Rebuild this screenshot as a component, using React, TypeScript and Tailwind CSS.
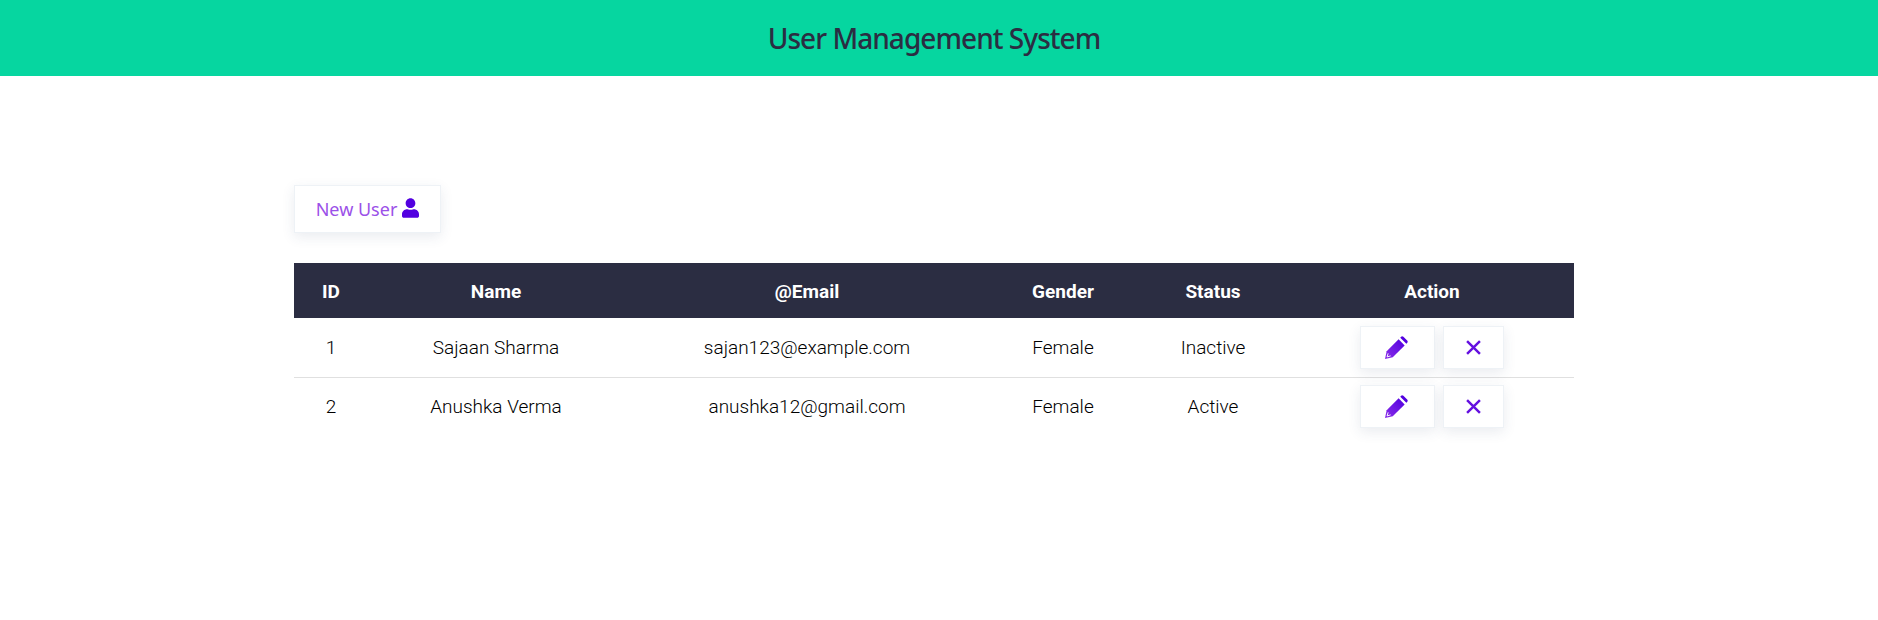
import React from 'react';
import { FaUser } from 'react-icons/fa';

type User = {
  id: number;
  name: string;
  email: string;
  gender: string;
  status: string;
};

const users: User[] = [
  { id: 1, name: 'Sajaan Sharma', email: 'sajan123@example.com', gender: 'Female', status: 'Inactive' },
  { id: 2, name: 'Anushka Verma', email: 'anushka12@gmail.com', gender: 'Female', status: 'Active' },
];

const headers = ['ID', 'Name', '@Email', 'Gender', 'Status', 'Action'];

function PencilIcon({ id }: { id: string }) {
  return (
    <svg viewBox="0 0 22 22" className="w-[23px] h-[23px] mr-[3px]">
      <defs>
        <linearGradient id={id} x1="0" y1="1" x2="1" y2="0">
          <stop offset="0" stopColor="#8a2fe8" />
          <stop offset="1" stopColor="#5200e0" />
        </linearGradient>
      </defs>
      <path d="M0 22 L1.6 14.6 L13 3.2 L18.8 9 L7.4 20.4 Z" fill={`url(#${id})`} />
      <path d="M14.6 1.6 L15.4 0.8 Q16.4 -0.2 17.6 0.8 L21.2 4.4 Q22.2 5.6 21.2 6.6 L20.4 7.4 Z" fill="#5200e0" />
      <path d="M2 20 L3 16.6 M2 20 L5.4 19" stroke="#fff" strokeWidth="0.9" fill="none" />
    </svg>
  );
}

function CloseIcon() {
  return (
    <svg viewBox="0 0 14 14" className="w-[15px] h-[15px]">
      <path d="M1 1 L13 13 M13 1 L1 13" stroke="#6410e0" strokeWidth="2.3" fill="none" />
    </svg>
  );
}

export default function App() {
  return (
    <div className="min-h-screen bg-white font-['Roboto',sans-serif]">
      <header className="h-[76px] flex justify-center items-center bg-[#06d6a0] pr-[10px]">
        <h1 className="text-[28px] leading-[38px] font-medium text-[#2b2d42] font-['Noto_Sans',sans-serif] tracking-[-0.95px]">
          User Management System
        </h1>
      </header>

      <main className="w-[1280px] ml-[294px] pt-[109px]">
        <button
          type="button"
          className="w-[147px] h-[48px] flex justify-center items-center gap-[5px] bg-white border border-[#eef2f6] shadow-[0_4px_12px_rgba(50,70,110,0.1)] text-[18px] text-[#9b51e8] font-['Noto_Sans',sans-serif]"
        >
          New User
          <FaUser className="w-[17px] h-[20px] mb-[2px] text-[#5200e0]" />
        </button>

        <table className="w-full mt-[30px] table-fixed border-collapse text-[19px] font-[350] text-[#000000]">
          <colgroup>
            <col className="w-[74px]" />
            <col className="w-[256px]" />
            <col className="w-[366px]" />
            <col className="w-[146px]" />
            <col className="w-[154px]" />
            <col className="w-[284px]" />
          </colgroup>
          <thead>
            <tr className="h-[55px] bg-[#2b2d42] text-white">
              {headers.map((h) => (
                <th key={h} className="font-bold text-center pt-[3px]">{h}</th>
              ))}
            </tr>
          </thead>
          <tbody>
            {users.map((u) => (
              <tr key={u.id} className="h-[59px] border-b border-[#e0e0e0] last:border-b-0 text-center">
                <td className="pt-[1px]">{u.id}</td>
                <td className="pt-[1px]">{u.name}</td>
                <td className="pt-[1px]">{u.email}</td>
                <td className="pt-[1px]">{u.gender}</td>
                <td className="pt-[1px]">{u.status}</td>
                <td>
                  <div className="flex justify-center gap-[8px]">
                    <button
                      type="button"
                      className="w-[75px] h-[43px] flex justify-center items-center bg-white border border-[#eef2f6] shadow-[0_4px_12px_rgba(50,70,110,0.1)]"
                    >
                      <PencilIcon id={`pencil-${u.id}`} />
                    </button>
                    <button
                      type="button"
                      className="w-[61px] h-[43px] flex justify-center items-center bg-white border border-[#eef2f6] shadow-[0_4px_12px_rgba(50,70,110,0.1)]"
                    >
                      <CloseIcon />
                    </button>
                  </div>
                </td>
              </tr>
            ))}
          </tbody>
        </table>
      </main>
    </div>
  );
}
